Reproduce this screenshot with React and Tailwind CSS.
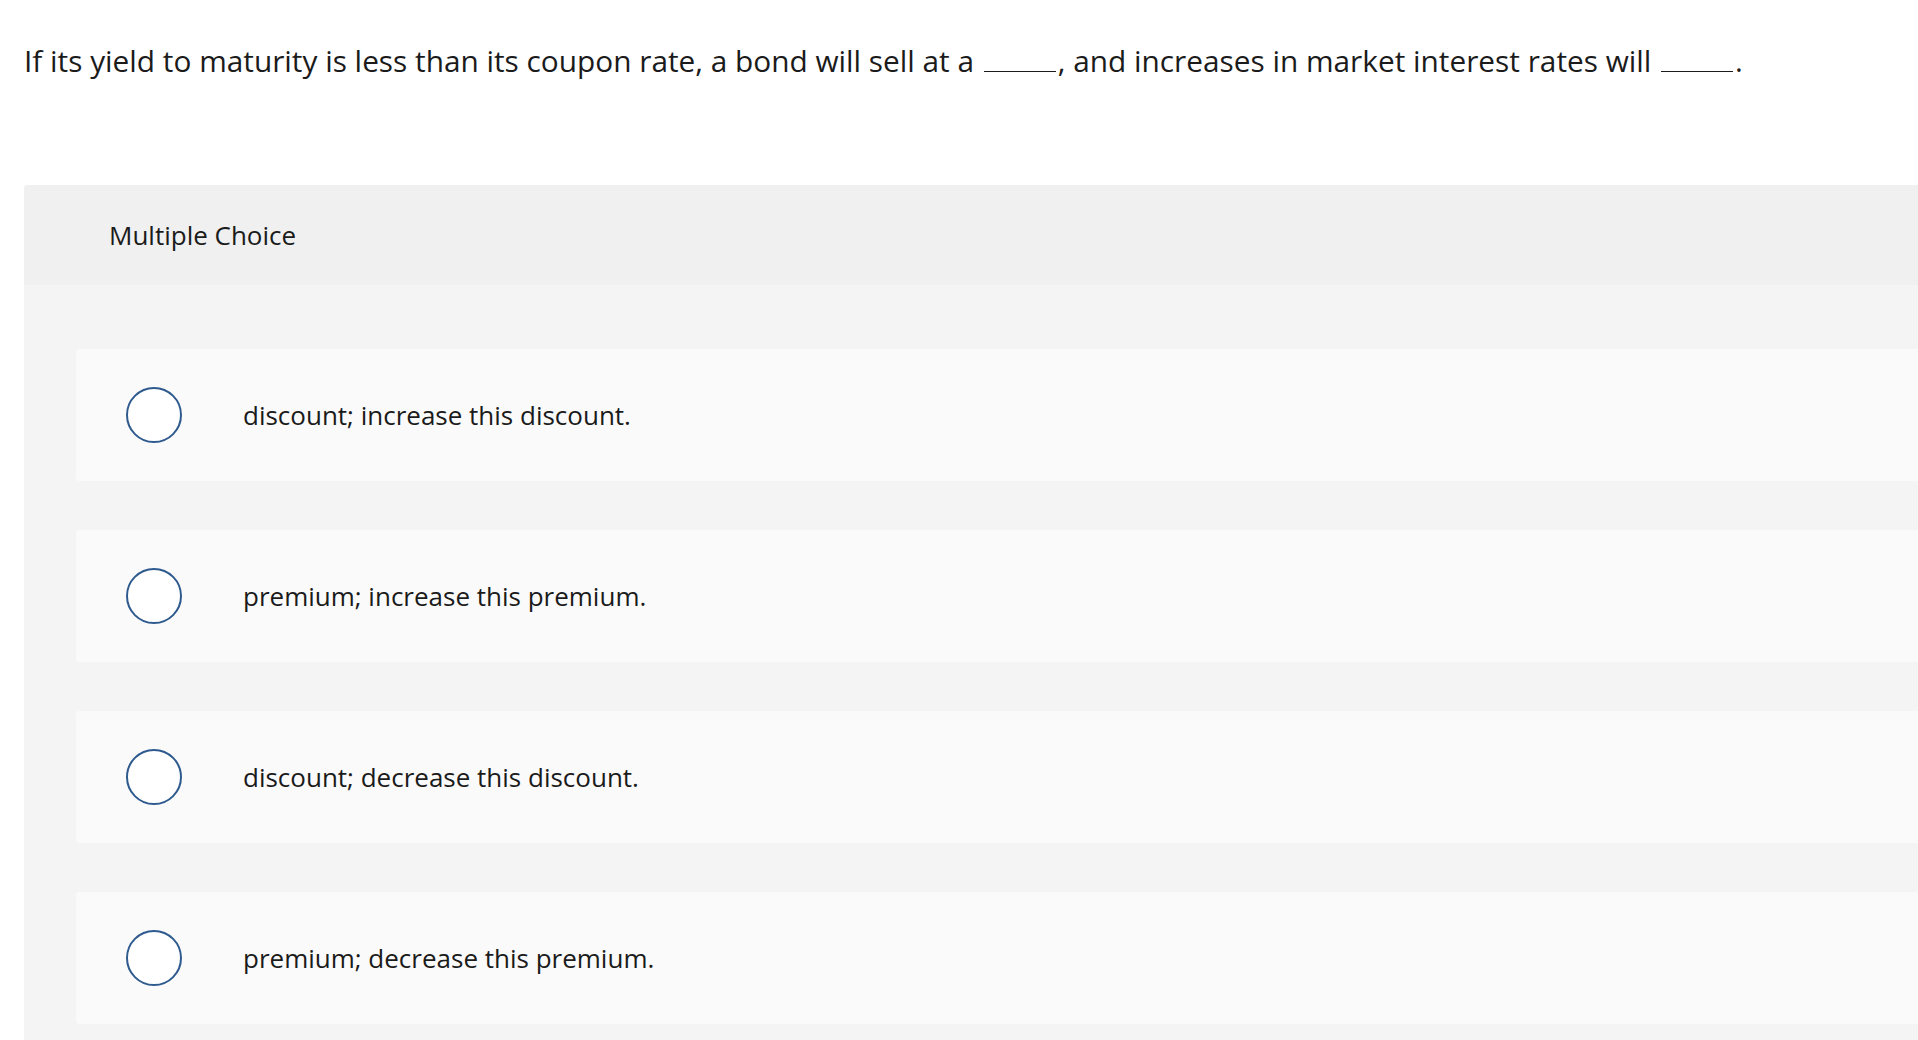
const OPTIONS = [
  "discount; increase this discount.",
  "premium; increase this premium.",
  "discount; decrease this discount.",
  "premium; decrease this premium.",
]

function Blank() {
  return <span className="mx-[2px] inline-block w-[72px] border-b-[1.5px] border-[#1b1b1b] align-baseline" />
}

export default function App() {
  return (
    <div className="h-[1040px] w-[1918px] overflow-hidden bg-white font-['Open_Sans','Liberation_Sans',sans-serif] text-[#1b1b1b]">
      <p className="pl-6 pt-[41px] text-[29.8px] leading-[40px]">
        If its yield to maturity is less than its coupon rate, a bond will sell at a <Blank />, and
        increases in market interest rates will <Blank />.
      </p>

      <section className="ml-6 mt-[104px] w-[1960px] rounded-t bg-[#f4f4f4] pb-10">
        <div className="flex h-[100px] items-center rounded-t bg-[#f0f0f0] pl-[85px] text-[26px]">
          Multiple Choice
        </div>

        <div className="flex flex-col gap-[49px] pl-[52px] pt-16">
          {OPTIONS.map((label) => (
            <div
              key={label}
              className="flex h-[132px] items-center rounded bg-[#fafafa] pl-[50px]"
            >
              <span className="h-[56px] w-[56px] shrink-0 rounded-full border-2 border-[#2e5a8e] bg-white" />
              <span className="ml-[61px] text-[26px]">{label}</span>
            </div>
          ))}
        </div>
      </section>
    </div>
  )
}
